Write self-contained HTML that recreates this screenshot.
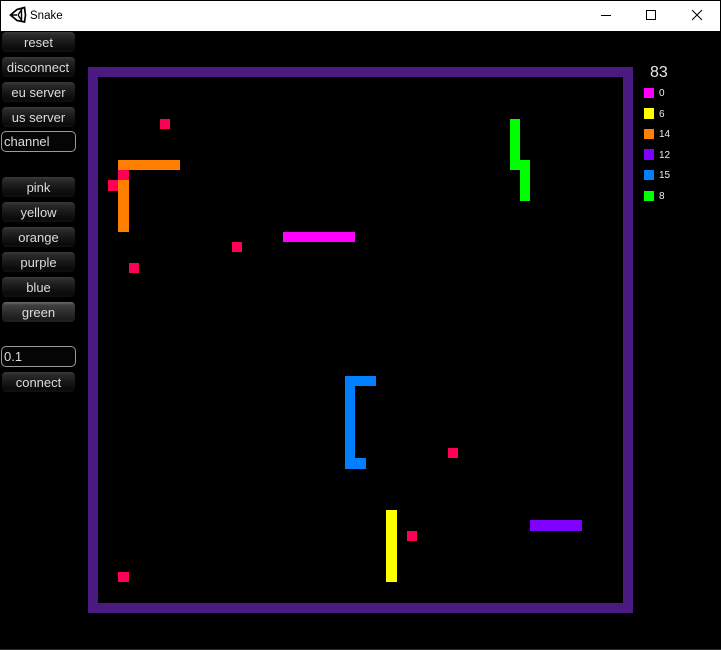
<!DOCTYPE html>
<html>
<head>
<meta charset="utf-8">
<title>Snake</title>
<style>
html,body{margin:0;padding:0;background:#000;}
body{width:721px;height:650px;position:relative;overflow:hidden;font-family:"Liberation Sans",sans-serif;}
.r{position:absolute;}
.tb{position:absolute;left:1px;top:1px;width:719px;height:30px;background:#fff;}
.title{position:absolute;left:30px;top:9px;font-size:11.5px;line-height:14px;color:#000;}
.b{position:absolute;left:2px;width:73px;height:20px;border-radius:4px;background:linear-gradient(#3a3a3a 0,#2a2a2a 3px,#1a1a1a 9px,#0a0a0a 17px,#111 100%);color:#dcdcdc;font-size:13px;line-height:21px;text-align:center;}
.b.g{background:linear-gradient(#6e6e6e 0,#404040 3px,#303030 9px,#1c1c1c 17px,#202020 100%);}
.i{position:absolute;left:1px;width:73px;height:19px;border:1px solid #9a9a9a;border-radius:5px;background:#050505;color:#dcdcdc;font-size:13px;line-height:20px;text-indent:2px;}
.l{position:absolute;left:659px;font-size:10px;line-height:10px;color:#eee;}
</style>
</head>
<body>
<div class="tb"></div>
<svg class="r" style="left:9px;top:6px" width="18" height="18" viewBox="0 0 18 18" fill="none" stroke="#000">
<path d="M1.5 9 L8 3.5 L15.5 1.5 L16.5 9 L15.5 16 L8 14.5 Z" stroke-width="1.7"/>
<path d="M8 9 H2 M9 9 L13 3 M9 9 L13 15 M12.5 3.5 V14.5" stroke-width="1.4"/>
</svg>
<div class="title">Snake</div>
<svg class="r" style="left:590px;top:0" width="131" height="31" viewBox="0 0 131 31" fill="none" stroke="#000" stroke-width="1" shape-rendering="crispEdges">
<path d="M11 15.5 H21"/>
<rect x="56.5" y="10.5" width="9" height="9"/>
<path d="M102 10 L112 20 M112 10 L102 20" shape-rendering="auto"/>
</svg>

<div class="b" style="top:32px">reset</div>
<div class="b" style="top:57px;text-indent:-1px">disconnect</div>
<div class="b" style="top:82px">eu server</div>
<div class="b" style="top:107px">us server</div>
<div class="i" style="top:131px">channel</div>
<div class="b" style="top:177px">pink</div>
<div class="b" style="top:202px">yellow</div>
<div class="b" style="top:227px">orange</div>
<div class="b" style="top:252px">purple</div>
<div class="b" style="top:277px">blue</div>
<div class="b g" style="top:302px">green</div>
<div class="i" style="top:346px">0.1</div>
<div class="b" style="top:372px">connect</div>

<!-- arena border -->
<div class="r" style="left:88px;top:67px;width:545px;height:10px;background:#4a1a80"></div>
<div class="r" style="left:88px;top:603px;width:545px;height:10px;background:#4a1a80"></div>
<div class="r" style="left:88px;top:67px;width:10px;height:546px;background:#4a1a80"></div>
<div class="r" style="left:623px;top:67px;width:10px;height:546px;background:#4a1a80"></div>

<!-- orange snake -->
<div class="r" style="left:118px;top:160px;width:62px;height:10px;background:#ff8000"></div>
<div class="r" style="left:118px;top:170px;width:11px;height:62px;background:#ff8000"></div>
<!-- green snake -->
<div class="r" style="left:510px;top:119px;width:10px;height:51px;background:#00ff00"></div>
<div class="r" style="left:520px;top:160px;width:10px;height:41px;background:#00ff00"></div>
<!-- blue snake -->
<div class="r" style="left:345px;top:376px;width:10px;height:93px;background:#0080ff"></div>
<div class="r" style="left:345px;top:376px;width:31px;height:10px;background:#0080ff"></div>
<div class="r" style="left:345px;top:458px;width:21px;height:11px;background:#0080ff"></div>
<!-- pink, yellow, purple snakes -->
<div class="r" style="left:283px;top:232px;width:72px;height:10px;background:#ff00ff"></div>
<div class="r" style="left:386px;top:510px;width:11px;height:72px;background:#ffff00"></div>
<div class="r" style="left:530px;top:520px;width:52px;height:11px;background:#8000ff"></div>

<!-- food -->
<div class="r" style="left:160px;top:119px;width:10px;height:10px;background:#ff0055"></div>
<div class="r" style="left:118px;top:170px;width:11px;height:10px;background:#ff0055"></div>
<div class="r" style="left:108px;top:180px;width:10px;height:11px;background:#ff0055"></div>
<div class="r" style="left:232px;top:242px;width:10px;height:10px;background:#ff0055"></div>
<div class="r" style="left:129px;top:263px;width:10px;height:10px;background:#ff0055"></div>
<div class="r" style="left:448px;top:448px;width:10px;height:10px;background:#ff0055"></div>
<div class="r" style="left:407px;top:531px;width:10px;height:10px;background:#ff0055"></div>
<div class="r" style="left:118px;top:572px;width:11px;height:10px;background:#ff0055"></div>

<!-- scoreboard -->
<div class="r" style="left:650px;top:64px;font-size:16px;line-height:17px;color:#e8e8e8">83</div>
<div class="r" style="left:644px;top:88px;width:10px;height:10px;background:#ff00ff"></div>
<div class="l" style="top:89px">0</div>
<div class="r" style="left:644px;top:108px;width:10px;height:11px;background:#ffff00"></div>
<div class="l" style="top:110px">6</div>
<div class="r" style="left:644px;top:129px;width:10px;height:10px;background:#ff8000"></div>
<div class="l" style="top:130px">14</div>
<div class="r" style="left:644px;top:149px;width:10px;height:11px;background:#8000ff"></div>
<div class="l" style="top:151px">12</div>
<div class="r" style="left:644px;top:170px;width:10px;height:10px;background:#0080ff"></div>
<div class="l" style="top:171px">15</div>
<div class="r" style="left:644px;top:191px;width:10px;height:10px;background:#00ff00"></div>
<div class="l" style="top:192px">8</div>

<!-- window edges -->
<div class="r" style="left:0;top:649px;width:721px;height:1px;background:#2a2a2a"></div>
</body>
</html>
